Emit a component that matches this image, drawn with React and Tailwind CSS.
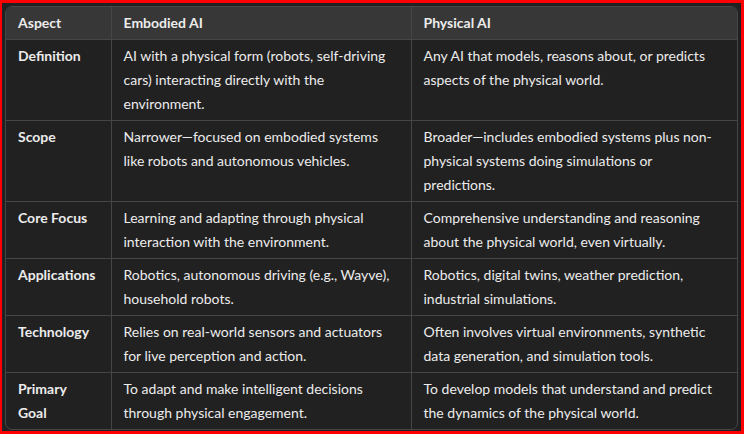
const rows = [
  {
    aspect: 'Definition',
    embodied: 'AI with a physical form (robots, self-driving cars) interacting directly with the environment.',
    physical: 'Any AI that models, reasons about, or predicts aspects of the physical world.',
  },
  {
    aspect: 'Scope',
    embodied: 'Narrower\u2014focused on embodied systems like robots and autonomous vehicles.',
    physical: 'Broader\u2014includes embodied systems plus non-physical systems doing simulations or predictions.',
  },
  {
    aspect: 'Core Focus',
    embodied: 'Learning and adapting through physical interaction with the environment.',
    physical: 'Comprehensive understanding and reasoning about the physical world, even virtually.',
  },
  {
    aspect: 'Applications',
    embodied: 'Robotics, autonomous driving (e.g., Wayve), household robots.',
    physical: 'Robotics, digital twins, weather prediction, industrial simulations.',
  },
  {
    aspect: 'Technology',
    embodied: 'Relies on real-world sensors and actuators for live perception and action.',
    physical: 'Often involves virtual environments, synthetic data generation, and simulation tools.',
  },
  {
    aspect: 'Primary Goal',
    embodied: 'To adapt and make intelligent decisions through physical engagement.',
    physical: 'To develop models that understand and predict the dynamics of the physical world.',
  },
]

export default function App() {
  return (
    <div className="h-[434px] w-[744px] bg-[#ff0000] pb-[3px] pl-[2px] pr-[3px] pt-[3px]">
      <div
        className="h-full w-full bg-[#212121] p-[3px] text-[14px] leading-[24px] text-[#ececec]"
        style={{ fontFamily: 'Lato, "Liberation Sans", sans-serif' }}
      >
        <div className="h-[424px] overflow-hidden rounded-[7px] border border-[#464646]">
          <table className="w-full table-fixed border-collapse">
            <colgroup>
              <col className="w-[105px]" />
              <col className="w-[300px]" />
              <col />
            </colgroup>
            <thead>
              <tr className="bg-[#373737]">
                <th className="px-3 py-1 text-left font-bold">Aspect</th>
                <th className="border-l border-[#464646] px-3 py-1 text-left font-bold">Embodied AI</th>
                <th className="border-l border-[#464646] px-3 py-1 text-left font-bold">Physical AI</th>
              </tr>
            </thead>
            <tbody>
              {rows.map((r) => (
                <tr key={r.aspect} className="border-t border-[#464646] align-top">
                  <td className="px-3 py-1 font-bold">{r.aspect}</td>
                  <td className="border-l border-[#464646] px-3 py-1">{r.embodied}</td>
                  <td className="border-l border-[#464646] px-3 py-1">{r.physical}</td>
                </tr>
              ))}
            </tbody>
          </table>
        </div>
      </div>
    </div>
  )
}
